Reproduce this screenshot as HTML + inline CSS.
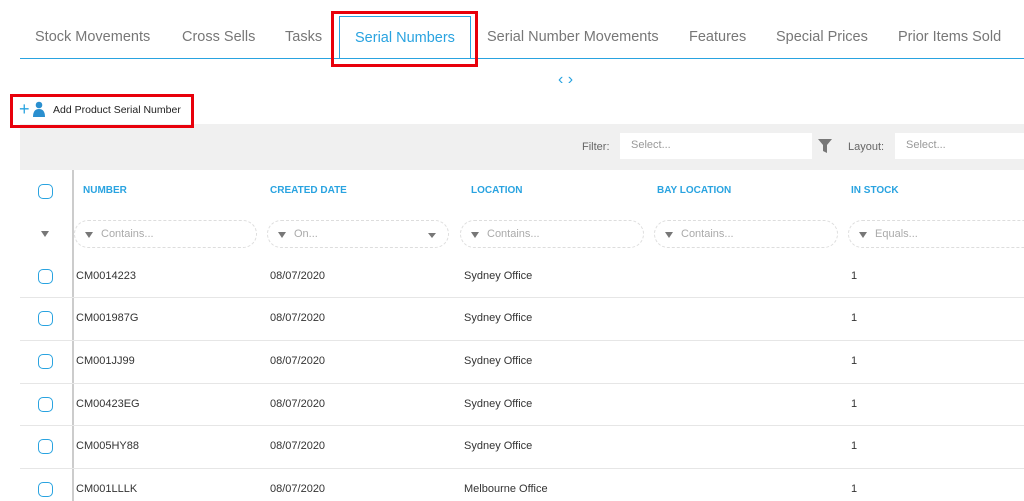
<!DOCTYPE html>
<html><head><style>
*{margin:0;padding:0;box-sizing:border-box}
body{width:1024px;height:501px;background:#fff;font-family:"Liberation Sans",sans-serif;position:relative;overflow:hidden}
.a{position:absolute;white-space:nowrap}
.tab{font-size:14.5px;color:#777;top:29px}
.hd{font-size:10px;font-weight:bold;color:#29a3e0;top:185px}
.pill{position:absolute;top:220px;height:28px;border:1px dashed #ddd;border-radius:14px;font-size:11px;color:#aaa;padding:7px 0 0 26px}
.pill:before{content:"";position:absolute;left:10px;top:11px;border-left:4px solid transparent;border-right:4px solid transparent;border-top:6px solid #777}
.cb{position:absolute;left:38px;width:15px;height:15px;border:1.3px solid #29a3e0;border-radius:5px}
.cell{font-size:11px;color:#333}
.sep{position:absolute;left:20px;right:0;height:1px;background:#e6e6e6}
</style></head><body>
<div class="a tab" style="left:35px">Stock Movements</div>
<div class="a tab" style="left:182px">Cross Sells</div>
<div class="a tab" style="left:285px">Tasks</div>
<div class="a" style="left:339px;top:16px;width:132px;height:43px;border:1px solid #29a3e0;border-bottom:none;background:#fff"></div>
<div class="a tab" style="left:355px;top:30px;color:#29a3e0">Serial Numbers</div>
<div class="a tab" style="left:487px">Serial Number Movements</div>
<div class="a tab" style="left:689px">Features</div>
<div class="a tab" style="left:776px">Special Prices</div>
<div class="a tab" style="left:898px">Prior Items Sold</div>
<div class="a" style="left:20px;top:58px;width:1004px;height:1px;background:#29a3e0"></div>
<div class="a" style="left:331px;top:11px;width:147px;height:56px;border:3px solid #e8000b"></div>
<div class="a" style="left:558px;top:71px;font-size:16px;color:#29a3e0">‹ ›</div>
<div class="a" style="left:20px;top:124px;width:1004px;height:46px;background:#f0f0f0"></div>
<div class="a" style="left:10px;top:94px;width:184px;height:34px;border:3px solid #e8000b;z-index:2"></div>
<div class="a" style="left:19px;top:99px;font-size:18px;color:#29a3e0">+</div>
<svg class="a" style="left:32px;top:101px" width="14" height="16"><circle cx="7" cy="4" r="3.3" fill="#2a8fcf"/><path d="M1 16 Q1 8 7 8 Q13 8 13 16Z" fill="#2a8fcf"/></svg>
<div class="a" style="left:53px;top:104px;font-size:10.5px;color:#222">Add Product Serial Number</div>
<div class="a" style="left:582px;top:141px;font-size:11px;color:#666">Filter:</div>
<div class="a" style="left:620px;top:133px;width:192px;height:26px;background:#fff;font-size:11px;color:#999;padding:6px 11px">Select...</div>
<svg class="a" style="left:818px;top:139px" width="14" height="14"><path d="M0 0H14L9 6V14L5 12V6Z" fill="#777"/></svg>
<div class="a" style="left:848px;top:141px;font-size:11px;color:#666">Layout:</div>
<div class="a" style="left:895px;top:133px;width:129px;height:26px;background:#fff;font-size:11px;color:#999;padding:6px 11px">Select...</div>
<div class="a" style="left:72px;top:170px;width:2px;height:331px;background:#ccc"></div>
<div class="cb" style="top:184px"></div>
<div class="a hd" style="left:83px">NUMBER</div>
<div class="a hd" style="left:270px">CREATED DATE</div>
<div class="a hd" style="left:471px">LOCATION</div>
<div class="a hd" style="left:657px">BAY LOCATION</div>
<div class="a hd" style="left:851px">IN STOCK</div>
<div class="a" style="left:41px;top:231px;border-left:4px solid transparent;border-right:4px solid transparent;border-top:6px solid #777"></div>
<div class="pill" style="left:74px;width:183px">Contains...</div>
<div class="pill" style="left:267px;width:182px">On...<span style="position:absolute;right:12px;top:12px;border-left:4px solid transparent;border-right:4px solid transparent;border-top:5px solid #777"></span></div>
<div class="pill" style="left:460px;width:184px">Contains...</div>
<div class="pill" style="left:654px;width:184px">Contains...</div>
<div class="pill" style="left:848px;width:190px">Equals...</div>
<div class="sep" style="top:297px"></div><div class="sep" style="top:340px"></div><div class="sep" style="top:383px"></div><div class="sep" style="top:425px"></div><div class="sep" style="top:468px"></div>
<div class="cb" style="top:269px"></div><div class="a cell" style="left:76px;top:270px">CM0014223</div><div class="a cell" style="left:270px;top:270px">08/07/2020</div><div class="a cell" style="left:464px;top:270px">Sydney Office</div><div class="a cell" style="left:851px;top:270px">1</div>
<div class="cb" style="top:311px"></div><div class="a cell" style="left:76px;top:312px">CM001987G</div><div class="a cell" style="left:270px;top:312px">08/07/2020</div><div class="a cell" style="left:464px;top:312px">Sydney Office</div><div class="a cell" style="left:851px;top:312px">1</div>
<div class="cb" style="top:354px"></div><div class="a cell" style="left:76px;top:355px">CM001JJ99</div><div class="a cell" style="left:270px;top:355px">08/07/2020</div><div class="a cell" style="left:464px;top:355px">Sydney Office</div><div class="a cell" style="left:851px;top:355px">1</div>
<div class="cb" style="top:397px"></div><div class="a cell" style="left:76px;top:398px">CM00423EG</div><div class="a cell" style="left:270px;top:398px">08/07/2020</div><div class="a cell" style="left:464px;top:398px">Sydney Office</div><div class="a cell" style="left:851px;top:398px">1</div>
<div class="cb" style="top:439px"></div><div class="a cell" style="left:76px;top:440px">CM005HY88</div><div class="a cell" style="left:270px;top:440px">08/07/2020</div><div class="a cell" style="left:464px;top:440px">Sydney Office</div><div class="a cell" style="left:851px;top:440px">1</div>
<div class="cb" style="top:482px"></div><div class="a cell" style="left:76px;top:483px">CM001LLLK</div><div class="a cell" style="left:270px;top:483px">08/07/2020</div><div class="a cell" style="left:464px;top:483px">Melbourne Office</div><div class="a cell" style="left:851px;top:483px">1</div>
</body></html>
